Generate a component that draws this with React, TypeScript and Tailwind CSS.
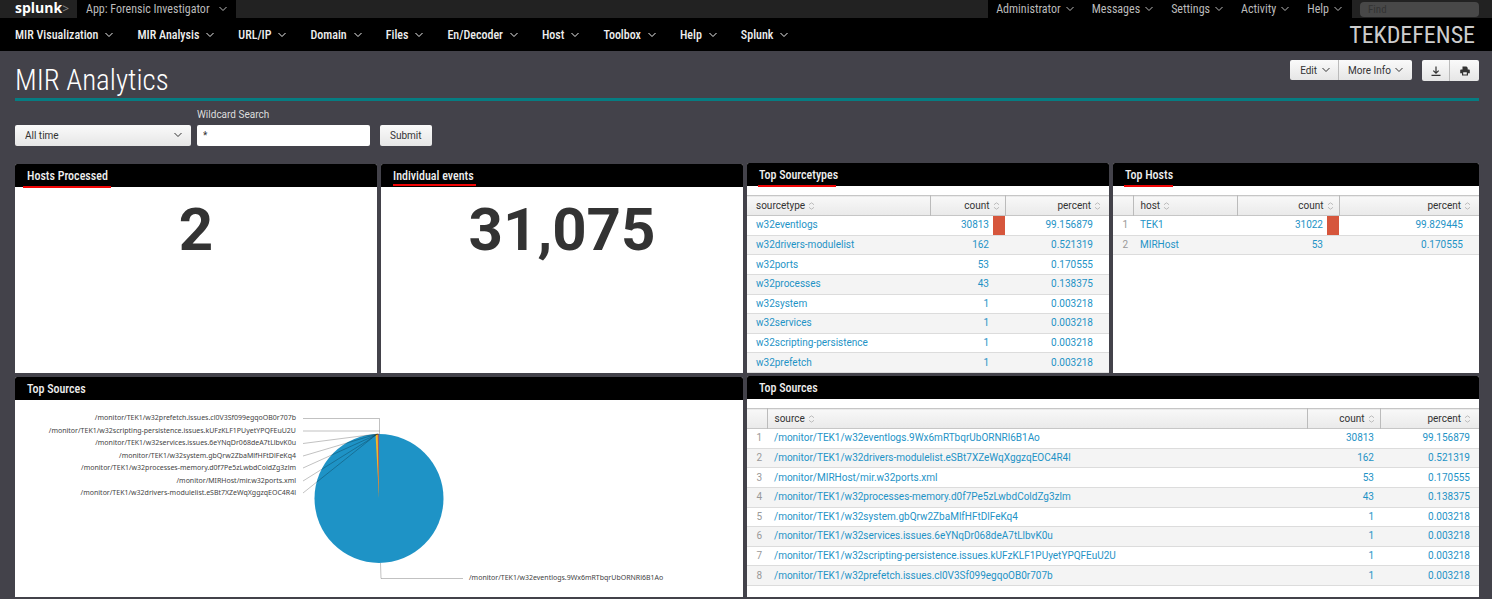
import type { ReactNode } from "react";

const CONDENSED = "font-['Roboto_Condensed','Roboto',sans-serif]";

function Chevron({ className = "" }: { className?: string }) {
  return (
    <svg viewBox="0 0 8 6" className={`h-[6px] w-[8px] shrink-0 ${className}`} fill="none" stroke="currentColor" strokeWidth="1" aria-hidden="true">
      <path d="M0.5 1 4 4.500 7.500 1" />
    </svg>
  );
}

function SortIcon() {
  return (
    <svg viewBox="0 0 5 8" className="h-[8px] w-[5px] shrink-0" fill="none" stroke="#bdbdbd" strokeWidth="1" aria-hidden="true">
      <path d="M0.5 3V2.2L2.5 0.8 4.5 2.2V3M0.5 5V5.8L2.5 7.2 4.5 5.8V5" />
    </svg>
  );
}

function Panel({ title, underline, className = "", children }: { title: string; underline?: string; className?: string; children: ReactNode }) {
  return (
    <section className={`flex min-w-0 flex-col overflow-hidden rounded-t-xs bg-white ${className}`}>
      <h2 className={`flex h-[23px] shrink-0 items-center bg-black px-3 text-xs font-medium text-[#eee] ${CONDENSED}`}>
        <span className="relative">
          {title}
          {underline && <span className={`absolute h-[2px] bg-[#f00505] ${underline}`} />}
        </span>
      </h2>
      {children}
    </section>
  );
}

type Column = { label: string; width: string };
type Row = [string, string, string];

function ResultTable({ columns, rows, numbered, heat, className = "" }: { columns: Column[]; rows: Row[]; numbered?: boolean; heat?: boolean; className?: string }) {
  const pad = heat ? "pr-4" : "pr-[6px]";
  const lastPad = heat ? "pr-4" : "pr-[9px]";
  return (
    <table className={`mt-[9px] w-full table-fixed border-collapse text-[10px] leading-3 ${className}`}>
      <thead>
        <tr className="h-[20px] border-y border-[#c6c6c6] bg-linear-to-b from-[#f8f8f8] to-[#eaeaea] text-[#333]">
          {numbered && <th className="w-[20px] border-r border-[#bbb]" aria-label="row" />}
          {columns.map((c, i) => (
            <th key={c.label} className={`p-0 font-normal ${c.width} ${i < 2 ? "border-r border-[#bbb]" : ""}`}>
              <button type="button" className={`flex w-full items-center gap-1 ${i === 0 ? (numbered ? "pl-[7px]" : "pl-[9px]") : i === 1 ? "justify-end pr-[6px]" : "justify-end pr-[9px]"}`}>
                {c.label}
                <SortIcon />
              </button>
            </th>
          ))}
        </tr>
      </thead>
      <tbody>
        {rows.map((r, i) => (
          <tr key={r[0]} className="border-b border-[#dcdcdc] text-[#1e93c6] even:bg-[#f4f4f4]">
            {numbered && <td className="p-0 pr-[5px] text-right text-[#999]">{i + 1}</td>}
            <td className={`truncate p-0 ${numbered ? "pl-[7px]" : "pl-[9px]"}`}><a href="#">{r[0]}</a></td>
            <td className={`p-0 text-right ${pad} ${heat && i === 0 ? "bg-linear-to-l from-[#d6563c] from-[12px] to-transparent to-[12px]" : ""}`}>{r[1]}</td>
            <td className={`p-0 text-right ${lastPad}`}>{r[2]}</td>
          </tr>
        ))}
      </tbody>
    </table>
  );
}

const sourcetypes: Row[] = [
  ["w32eventlogs", "30813", "99.156879"],
  ["w32drivers-modulelist", "162", "0.521319"],
  ["w32ports", "53", "0.170555"],
  ["w32processes", "43", "0.138375"],
  ["w32system", "1", "0.003218"],
  ["w32services", "1", "0.003218"],
  ["w32scripting-persistence", "1", "0.003218"],
  ["w32prefetch", "1", "0.003218"],
];

const hosts: Row[] = [
  ["TEK1", "31022", "99.829445"],
  ["MIRHost", "53", "0.170555"],
];

const sources: Row[] = [
  ["/monitor/TEK1/w32eventlogs.9Wx6mRTbqrUbORNRl6B1Ao", "30813", "99.156879"],
  ["/monitor/TEK1/w32drivers-modulelist.eSBt7XZeWqXggzqEOC4R4l", "162", "0.521319"],
  ["/monitor/MIRHost/mir.w32ports.xml", "53", "0.170555"],
  ["/monitor/TEK1/w32processes-memory.d0f7Pe5zLwbdColdZg3zlm", "43", "0.138375"],
  ["/monitor/TEK1/w32system.gbQrw2ZbaMlfHFtDlFeKq4", "1", "0.003218"],
  ["/monitor/TEK1/w32services.issues.6eYNqDr068deA7tLlbvK0u", "1", "0.003218"],
  ["/monitor/TEK1/w32scripting-persistence.issues.kUFzKLF1PUyetYPQFEuU2U", "1", "0.003218"],
  ["/monitor/TEK1/w32prefetch.issues.cl0V3Sf099egqoOB0r707b", "1", "0.003218"],
];

const pieLabels = sources.slice(1).map((s) => s[0]).reverse();
const leaders = [
  "M288 18.500H364.500V34",
  "M288 31H364.500",
  "M288 43.500 350 35.500 364 34",
  "M288 56 352 37 363 34",
  "M288 68 352 39 363 34",
  "M288 81 352 41 362 34",
  "M288 93 352 42 361 35",
];

function SourcesPie() {
  return (
    <svg viewBox="0 0 728 197" className="h-[197px] w-full" role="img" aria-label="Top Sources">
      <circle cx="364" cy="98.500" r="64.500" fill="#1e93c6" />
      <path d="M364 98 360.5 34.1 364 34Z" fill="#f2b827" />
      <path d="M364 98 362.7 34 364 34Z" fill="#d6563c" />
      <path d="M364 98 363.4 34 364 34Z" fill="#6a5c9e" />
      <g fill="none" stroke="#000" strokeOpacity="0.35" strokeWidth="0.7">
        {leaders.map((d) => (
          <path key={d} d={d} />
        ))}
        <path d="M365.500 163 366 178.500H448" />
      </g>
      <g fill="#444" className="font-['Noto_Sans',sans-serif] text-[7px]">
        {pieLabels.map((l, i) => (
          <text key={l} x="281" y={20 + Math.round(i * 12.5)} textAnchor="end">{l}</text>
        ))}
        <text x="454" y="180">{sources[0][0]}</text>
      </g>
    </svg>
  );
}

const nav = ["MIR Visualization", "MIR Analysis", "URL/IP", "Domain", "Files", "En/Decoder", "Host", "Toolbox", "Help", "Splunk"];
const account = ["Administrator", "Messages", "Settings", "Activity", "Help"];
const raised = "bg-linear-to-b from-[#fafafa] to-[#e6e6e6] text-[#333]";

export default function App() {
  return (
    <div className="min-h-screen bg-[#43424a] font-['Roboto',sans-serif] text-[10px]">
      <header className={CONDENSED}>
        <div className="flex h-[18px] items-center bg-[#222] text-xs text-[#bbb]">
          <a href="#" className="w-[77px] pl-[15px] font-['Open_Sans',sans-serif] text-sm leading-none font-bold text-white">
            splunk<span className="text-xs font-normal text-[#888]">&gt;</span>
          </a>
          <button type="button" className="flex h-full items-center gap-[9px] bg-black pr-[9px] pl-[9px]">
            App: Forensic Investigator <Chevron />
          </button>
          <nav className="ml-auto flex h-full items-center gap-[18px] bg-black pr-[10px] pl-2">
            {account.map((a) => (
              <button type="button" key={a} className="flex items-center gap-[5px]">
                {a} <Chevron />
              </button>
            ))}
          </nav>
          <input aria-label="Find" placeholder="Find" className="mr-[13px] ml-2 h-[15px] w-[119px] rounded-sm bg-[#484848] px-2 text-[11px] placeholder:text-[#333]" />
        </div>
        <div className="flex h-[33px] items-center bg-black pr-[17px] pl-[15px] text-xs font-medium text-[#eee]">
          <nav className="flex items-center gap-6">
            {nav.map((n) => (
              <button type="button" key={n} className="flex items-center gap-[7px]">
                {n} <Chevron />
              </button>
            ))}
          </nav>
          <span className="ml-auto text-2xl leading-none font-normal text-[#ccc]">TEKDEFENSE</span>
        </div>
      </header>

      <main className="pr-[13px] pb-[2px] pl-[15px]">
        <div className="flex h-[50px] items-start justify-between border-b-[3px] border-[#067d82]">
          <h1 className={`pt-[11px] text-[29px] leading-9 font-light text-white ${CONDENSED}`}>MIR Analytics</h1>
          <div className="flex gap-[10px] pt-[9px]">
            <div className={`flex h-[20px] rounded-xs ${raised}`}>
              <button type="button" className="flex items-center gap-[5px] border-r border-[#bbb] pr-2 pl-[10px]">
                Edit <Chevron />
              </button>
              <button type="button" className="flex items-center gap-[4px] px-[9px]">
                More Info <Chevron />
              </button>
            </div>
            <div className={`flex h-[21px] rounded-xs ${raised}`}>
              <button type="button" aria-label="Export" className="flex w-7 items-center justify-center border-r border-[#bbb]">
                <svg viewBox="0 0 10 10" className="h-[10px] w-[10px]" fill="none" stroke="#333" strokeWidth="1.2">
                  <path d="M5 0.500V7M2.300 4.600 5 7.200 7.700 4.600M0.500 9.300H9.500" />
                </svg>
              </button>
              <button type="button" aria-label="Print" className="flex w-[29px] items-center justify-center">
                <svg viewBox="0 0 10 10" className="h-[10px] w-[10px]" fill="#333">
                  <path d="M2.500 0.500H6.500L7.700 1.700V3.400H9Q9.800 3.400 9.800 4.200V7.300H8V9.500H2V7.300H0.200V4.200Q0.200 3.400 1 3.400H2.500ZM3.200 6.300V8.500H6.800V6.300Z" fillRule="evenodd" />
                </svg>
              </button>
            </div>
          </div>
        </div>

        <form className="flex items-end pt-[7px]" onSubmit={(e) => e.preventDefault()}>
          <div className={`relative mr-[6px] w-[176px] rounded-xs ${raised}`}>
            <select aria-label="Time range" className="block h-[21px] w-full appearance-none pl-[10px]">
              <option>All time</option>
            </select>
            <Chevron className="pointer-events-none absolute top-[7px] right-[9px]" />
          </div>
          <div className="mr-[10px] w-[173px]">
            <label htmlFor="wildcard" className="block pb-[4px] leading-[13px] text-[#ddd]">Wildcard Search</label>
            <input id="wildcard" defaultValue="*" className="block h-[21px] w-full rounded-xs bg-white px-[6px] text-[#333]" />
          </div>
          <button type="submit" className={`h-[21px] rounded-xs px-[10px] ${raised}`}>Submit</button>
        </form>

        <div className="mt-[17px] grid grid-cols-[728fr_732fr] gap-[4px]">
          <div className="flex flex-col gap-[4px] pt-px">
            <div className="grid h-[209px] grid-cols-2 gap-[4px]">
              <Panel title="Hosts Processed" underline="-left-[4px] -bottom-[4px] w-[88px]">
                <p className="pt-[11px] text-center text-[60px] leading-[64px] font-bold text-[#333]">2</p>
              </Panel>
              <Panel title="Individual events" underline="left-0 -bottom-[2px] w-[83px]">
                <p className="pt-[11px] text-center text-[60px] leading-[64px] font-bold text-[#333]">31,075</p>
              </Panel>
            </div>
            <Panel title="Top Sources">
              <SourcesPie />
            </Panel>
          </div>
          <div className="flex flex-col gap-[3px]">
            <div className="grid h-[210px] grid-cols-[362fr_366fr] gap-[4px]">
              <Panel title="Top Sourcetypes" underline="-left-px -bottom-[4px] w-[78px]">
                <ResultTable
                  heat
                  className="h-[178px]"
                  columns={[{ label: "sourcetype", width: "" }, { label: "count", width: "w-[75px]" }, { label: "percent", width: "w-[104px]" }]}
                  rows={sourcetypes}
                />
              </Panel>
              <Panel title="Top Hosts" underline="-left-px -bottom-[4px] w-[49px]">
                <ResultTable
                  heat
                  numbered
                  className="h-[60px]"
                  columns={[{ label: "host", width: "" }, { label: "count", width: "w-[102px]" }, { label: "percent", width: "w-[140px]" }]}
                  rows={hosts}
                />
              </Panel>
            </div>
            <Panel title="Top Sources" className="flex-1">
              <ResultTable
                numbered
                className="h-[178px]"
                columns={[{ label: "source", width: "" }, { label: "count", width: "w-[73px]" }, { label: "percent", width: "w-[99px]" }]}
                rows={sources}
              />
            </Panel>
          </div>
        </div>
      </main>
    </div>
  );
}
